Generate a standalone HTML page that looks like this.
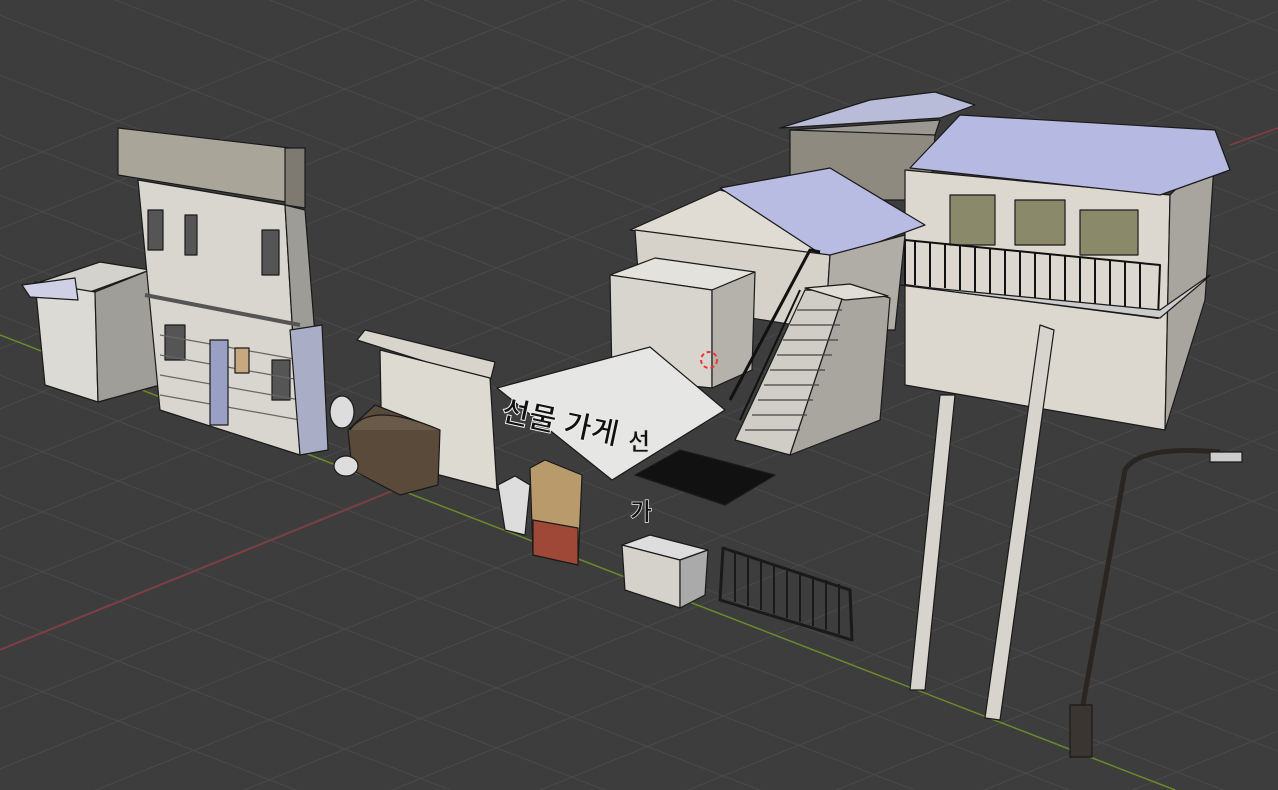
<!DOCTYPE html>
<html><head><meta charset="utf-8"><style>
html,body{margin:0;padding:0;background:#3d3d3d;overflow:hidden;width:1278px;height:790px}
#wrap{position:relative;width:1278px;height:790px;overflow:hidden}
svg{display:block}
</style></head><body><div id="wrap">
<svg width="1278" height="790" viewBox="0 0 1278 790" overflow="hidden" xmlns="http://www.w3.org/2000/svg">
<rect width="1278" height="790" fill="#3d3d3d"/>
<g stroke="#4a4a4a" stroke-width="1">
<path d="M-400 100 L1700 915 M-400 40 L1700 855 M-400 -20 L1700 795 M-400 -80 L1700 735 M-400 -140 L1700 675 M-400 -200 L1700 615 M-400 -260 L1700 555 M-400 -320 L1700 495 M-400 -380 L1700 435 M-400 -440 L1700 375 M-400 -500 L1700 315 M-400 -560 L1700 255 M-400 -620 L1700 195 M-400 -680 L1700 135 M-400 160 L1700 975 M-400 220 L1700 1035 M-400 280 L1700 1095 M-400 340 L1700 1155 M-400 400 L1700 1215 M-400 460 L1700 1275 M-400 520 L1700 1335"/>
<path d="M-200 370 L1700 -400 M-200 430 L1700 -340 M-200 490 L1700 -280 M-200 550 L1700 -220 M-200 610 L1700 -160 M-200 670 L1700 -100 M-200 730 L1700 -40 M-200 790 L1700 20 M-200 850 L1700 80 M-200 910 L1700 140 M-200 970 L1700 200 M-200 1030 L1700 260 M-200 1090 L1700 320 M-200 1150 L1700 380 M-200 1210 L1700 440 M-200 1270 L1700 500 M-200 1330 L1700 560 M-200 1390 L1700 620 M-200 1450 L1700 680 M-200 1510 L1700 740 M-200 1570 L1700 800 M-200 310 L1700 -460 M-200 250 L1700 -520"/>
</g>
<line x1="0" y1="650" x2="400" y2="488" stroke="#8a3a42" stroke-width="1.5"/>
<line x1="1230" y1="145" x2="1278" y2="128" stroke="#8a3a42" stroke-width="1.5"/>
<line x1="0" y1="335" x2="1175" y2="790" stroke="#6a8a2a" stroke-width="1.5"/>

<g stroke="#1a1a1a" stroke-width="1.2" stroke-linejoin="round">
<polygon points="780,128 870,100 935,92 975,105 940,118" fill="#b8bcd8"/>
<polygon points="790,130 940,120 935,135 790,140" fill="#9a9890"/>
<polygon points="790,130 935,135 930,200 790,200" fill="#8e8a80"/>
<polygon points="905,170 1170,195 1165,430 905,385" fill="#dcd8d0"/>
<polygon points="1170,195 1215,150 1205,300 1165,430" fill="#a8a59e"/>
<polygon points="910,168 960,115 1215,130 1230,170 1160,195" fill="#b6b9e2"/>
<rect x="950" y="195" width="45" height="50" fill="#8a8a6a"/>
<rect x="1015" y="200" width="50" height="45" fill="#8a8a6a"/>
<rect x="1080" y="210" width="58" height="45" fill="#8a8a6a"/>
<polygon points="905,240 1160,265 1158,318 905,285" fill="none" stroke="#111" stroke-width="2"/>
<path d="M915 240v45M930 242v45M945 243v45M960 245v45M975 246v46M990 248v46M1005 249v46M1020 251v47M1035 252v47M1050 254v47M1065 255v48M1080 257v48M1095 258v49M1110 260v49M1125 261v50M1140 263v50" stroke="#111" stroke-width="2"/>
<polygon points="900,285 1160,318 1205,280 1210,275 1160,310" fill="#ccc"/>
<polygon points="630,230 720,190 905,240 830,260" fill="#e0dcd4"/>
<polygon points="720,188 830,168 925,225 830,260" fill="#b8bbe2"/>
<polygon points="635,230 830,255 825,330 640,300" fill="#d6d2ca"/>
<polygon points="830,255 905,235 895,330 825,330" fill="#b0ada6"/>
<polygon points="610,275 655,258 755,272 712,290" fill="#e4e2dc"/>
<polygon points="610,275 712,290 712,388 612,378" fill="#d8d5ce"/>
<polygon points="712,290 755,272 752,370 712,388" fill="#b5b2ab"/>
<polygon points="735,440 805,290 845,290 790,455" fill="#d0cdc6"/>
<polygon points="805,290 845,285 890,298 880,420 790,455 845,290" fill="#a9a6a0"/>
<polygon points="805,288 850,284 888,296 845,300" fill="#e0ddd6"/>
<path d="M745 430h55M752 415h55M758 400h55M764 385h55M770 370h55M777 355h55M783 340h55M790 325h50M797 310h45" stroke="#444"/>
<path d="M730 400 L810 250 L820 252" stroke="#111" stroke-width="3" fill="none"/>
<path d="M740 420 L800 290" stroke="#111" stroke-width="2" fill="none"/>
<polygon points="497,388 650,347 725,410 612,480" fill="#e6e6e4"/>
<polygon points="357,340 365,330 495,362 490,382" fill="#d8d4cc"/>
<polygon points="380,350 490,378 497,490 382,460" fill="#dddad2"/>
<polygon points="40,282 100,262 150,270 90,292" fill="#d4d2cc"/>
<polygon points="35,282 95,292 98,402 45,385" fill="#dcdad4"/>
<polygon points="95,292 150,270 160,385 98,402" fill="#a09e98"/>
<polygon points="22,285 75,278 78,300 30,297" fill="#cfd0e6"/>
<polygon points="118,128 290,148 305,205 118,175" fill="#aaa599"/>
<polygon points="285,148 305,148 305,208 285,205" fill="#7e7a72"/>
<polygon points="138,180 285,205 300,455 160,410" fill="#d8d6ce"/>
<polygon points="285,205 305,210 315,335 300,455" fill="#9e9c96"/>
<rect x="148" y="210" width="15" height="40" fill="#555"/>
<rect x="185" y="215" width="12" height="40" fill="#555"/>
<rect x="262" y="230" width="17" height="45" fill="#555"/>
<rect x="165" y="325" width="20" height="35" fill="#555"/>
<rect x="272" y="360" width="18" height="40" fill="#555"/>
<path d="M160 335 L300 360 M160 355 L300 380 M160 375 L300 400 M160 395 L300 420" stroke="#666"/>
<path d="M145 295 L300 325" stroke="#555" stroke-width="4"/>
<rect x="210" y="340" width="18" height="85" fill="#9aa0c4"/>
<rect x="235" y="348" width="14" height="25" fill="#c8a880"/>
<polygon points="290,330 322,325 328,450 300,455" fill="#a9aec6"/>
<polygon points="348,430 375,405 440,430 438,485 400,495 352,470" fill="#5a4a3a"/>
<path d="M350 430 Q370 400 440 430" fill="#6a5a48"/>
<ellipse cx="342" cy="412" rx="12" ry="16" fill="#ddd"/>
<ellipse cx="346" cy="466" rx="12" ry="10" fill="#ddd"/>
<polygon points="530,468 545,460 582,475 578,565 533,555" fill="#b99a6a"/>
<polygon points="533,520 578,528 578,565 533,555" fill="#a04838"/>
<polygon points="498,485 515,476 530,485 525,535 505,530" fill="#ddd"/>
<polygon points="635,475 680,450 775,475 725,505" fill="#111"/>
<polygon points="622,545 650,535 708,550 680,560" fill="#ddd"/>
<polygon points="622,545 680,560 680,608 625,590" fill="#d5d2cb"/>
<polygon points="680,560 708,550 705,595 680,608" fill="#aaa"/>
<polygon points="723,548 850,590 852,640 720,600" fill="none" stroke="#1a1a1a" stroke-width="3"/>
<path d="M735 552v50M748 556v50M761 560v50M774 564v50M787 568v50M800 572v50M813 576v50M826 580v50M839 584v50" stroke="#1a1a1a" stroke-width="2"/>
<polygon points="940,395 955,395 925,690 910,690" fill="#d6d4cc"/>
<polygon points="1040,325 1054,330 1000,720 985,718" fill="#d6d4cc"/>
<path d="M1082 710 L1125 470 Q1140 445 1220 452" stroke="#2a2520" stroke-width="5" fill="none"/>
<rect x="1210" y="452" width="32" height="10" fill="#ccc"/>
<rect x="1070" y="705" width="22" height="52" fill="#3a3530"/>
</g>
<text x="500" y="420" font-family="'Liberation Sans','Noto Sans CJK KR',sans-serif" font-size="30" font-weight="bold" fill="#111" stroke="#eee" stroke-width="1" transform="rotate(12 500 420)">선물 가게</text>
<text x="628" y="450" font-family="'Liberation Sans','Noto Sans CJK KR',sans-serif" font-size="24" font-weight="bold" fill="#111" stroke="#ddd" stroke-width="0.8">선</text>
<text x="630" y="520" font-family="'Liberation Sans','Noto Sans CJK KR',sans-serif" font-size="24" font-weight="bold" fill="#111" stroke="#ddd" stroke-width="0.8">가</text>
<circle cx="709" cy="360" r="8" fill="none" stroke="#e33" stroke-width="2" stroke-dasharray="4 3"/>
</svg>
</div></body></html>
